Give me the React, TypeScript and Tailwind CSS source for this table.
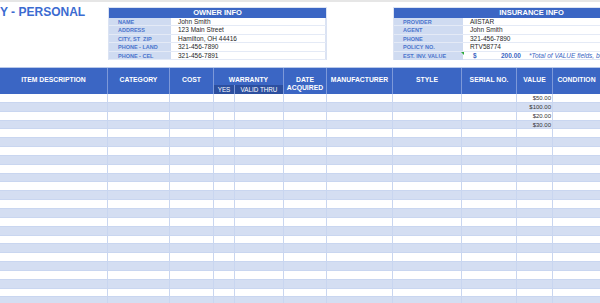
import { FC } from "react";

type InfoRow = { label: string; value: string };

const OWNER: InfoRow[] = [
  { label: "NAME", value: "John Smith" },
  { label: "ADDRESS", value: "123 Main Street" },
  { label: "CITY, ST  ZIP", value: "Hamilton, OH  44416" },
  { label: "PHONE - LAND", value: "321-456-7890" },
  { label: "PHONE - CEL", value: "321-456-7891" },
];

const INSURANCE: InfoRow[] = [
  { label: "PROVIDER", value: "AllSTAR" },
  { label: "AGENT", value: "John Smith" },
  { label: "PHONE", value: "321-456-7890" },
  { label: "POLICY NO.", value: "RTV58774" },
];

const VALUES = ["$50.00", "$100.00", "$20.00", "$30.00"];
const COLS = 11;
const ROWS = 24;

const InfoBox: FC<{
  title: string;
  rows: InfoRow[];
  labelWidth: string;
  className: string;
  withTotal?: boolean;
}> = ({ title, rows, labelWidth, className, withTotal }) => (
  <div className={`shrink-0 border border-[#dbe3f3] ${className}`}>
    <div className="h-[10px] bg-[#3b66c4] text-white font-bold text-[7.5px] leading-[10px] text-center">
      {title}
    </div>
    {rows.map((r) => (
      <div key={r.label} className="flex h-[8.4px] border-b border-[#e4eaf6]">
        <div
          className={`${labelWidth} shrink-0 bg-[#cfdbf1] text-[#4a74cc] font-bold text-[5.5px] leading-[8px] pl-[9px] whitespace-pre`}
        >
          {r.label}
        </div>
        <div className="flex-1 text-[#1f1f1f] text-[6.5px] leading-[8px] pl-[7px] border-r border-[#dbe3f3]">
          {r.value}
        </div>
      </div>
    ))}
    {withTotal && (
      <div className="flex h-[8.4px]">
        <div
          className={`${labelWidth} shrink-0 bg-[#cfdbf1] text-[#4a74cc] font-bold text-[5.5px] leading-[8px] pl-[9px] relative`}
        >
          EST. INV. VALUE
          <span className="absolute right-[-1px] top-0 w-0 h-0 border-l-[3px] border-l-transparent border-t-[3px] border-t-[#2eaa3a]" />
        </div>
        <div className="flex-1 flex text-[6.5px] leading-[8px] text-[#3b66c4]">
          <span className="font-bold pl-[10px] w-[38px]">$</span>
          <span className="font-bold w-[12px] text-right">200.00</span>
          <span className="italic pl-[16px] whitespace-nowrap">*Total of VALUE fields, below.</span>
        </div>
      </div>
    )}
  </div>
);

const HeadCell: FC<{ label: string; className?: string }> = ({ label, className = "" }) => (
  <div
    className={`row-span-2 border-r border-[#7d99d9] text-white font-bold text-[6.8px] leading-[8px] text-center pt-[8px] whitespace-pre-line ${className}`}
  >
    {label}
  </div>
);

export default function App() {
  return (
    <div className="w-[600px] h-[303px] overflow-hidden bg-white font-['Liberation_Sans',Arial,sans-serif]">
      <div className="h-[2px] bg-[#e6e6e6]" />
      <div className="flex h-[66px] border-b border-[#b9c9ea]">
        <div className="w-[108px] shrink-0 text-[#3b6bd1] font-bold text-[12px] leading-[13px] pt-[4px] whitespace-nowrap">
          Y - PERSONAL
        </div>
        <InfoBox title="OWNER INFO" rows={OWNER} labelWidth="w-[62px]" className="mt-[5px] w-[219px] h-[53px]" />
        <div className="w-[66px] shrink-0" />
        <InfoBox
          title="INSURANCE INFO"
          rows={INSURANCE}
          labelWidth="w-[69px]"
          className="mt-[5px] w-[277px] h-[53px]"
          withTotal
        />
      </div>

      <div className="grid grid-cols-[108px_62px_44px_21px_49px_43px_66px_69px_55px_36px_48px] grid-rows-[17px_9px] bg-[#3b66c4]">
        <HeadCell label="ITEM DESCRIPTION" />
        <HeadCell label="CATEGORY" />
        <HeadCell label="COST" />
        <div className="col-span-2 border-r border-[#7d99d9] text-white font-bold text-[6.8px] leading-[8px] text-center pt-[8px]">
          WARRANTY
        </div>
        <HeadCell label={"DATE\nACQUIRED"} className="col-start-6 row-start-1" />
        <HeadCell label="MANUFACTURER" className="col-start-7 row-start-1" />
        <HeadCell label="STYLE" className="col-start-8 row-start-1" />
        <HeadCell label="SERIAL NO." className="col-start-9 row-start-1" />
        <HeadCell label="VALUE" className="col-start-10 row-start-1" />
        <HeadCell label="CONDITION" className="col-start-11 row-start-1" />
        <div className="col-start-4 row-start-2 bg-[#2c4f9f] border-r border-[#7d99d9] text-white text-[6.3px] leading-[9px] text-center">
          YES
        </div>
        <div className="col-start-5 row-start-2 bg-[#2c4f9f] border-r border-[#7d99d9] text-white text-[6.3px] leading-[9px] text-center">
          VALID THRU
        </div>
      </div>

      <div className="grid grid-cols-[108px_62px_44px_21px_49px_43px_66px_69px_55px_36px_48px]">
        {Array.from({ length: ROWS }).map((_, r) =>
          Array.from({ length: COLS }).map((_, c) => (
            <div
              key={`${r}-${c}`}
              className={`h-[8.85px] border-r border-b border-[#c9d6f0] text-[6px] leading-[8px] text-right pr-[1px] text-[#333] ${
                r % 2 === 1 ? "bg-[#d4def2]" : "bg-white"
              }`}
            >
              {c === 9 && r < VALUES.length ? VALUES[r] : ""}
            </div>
          )),
        )}
      </div>
    </div>
  );
}
